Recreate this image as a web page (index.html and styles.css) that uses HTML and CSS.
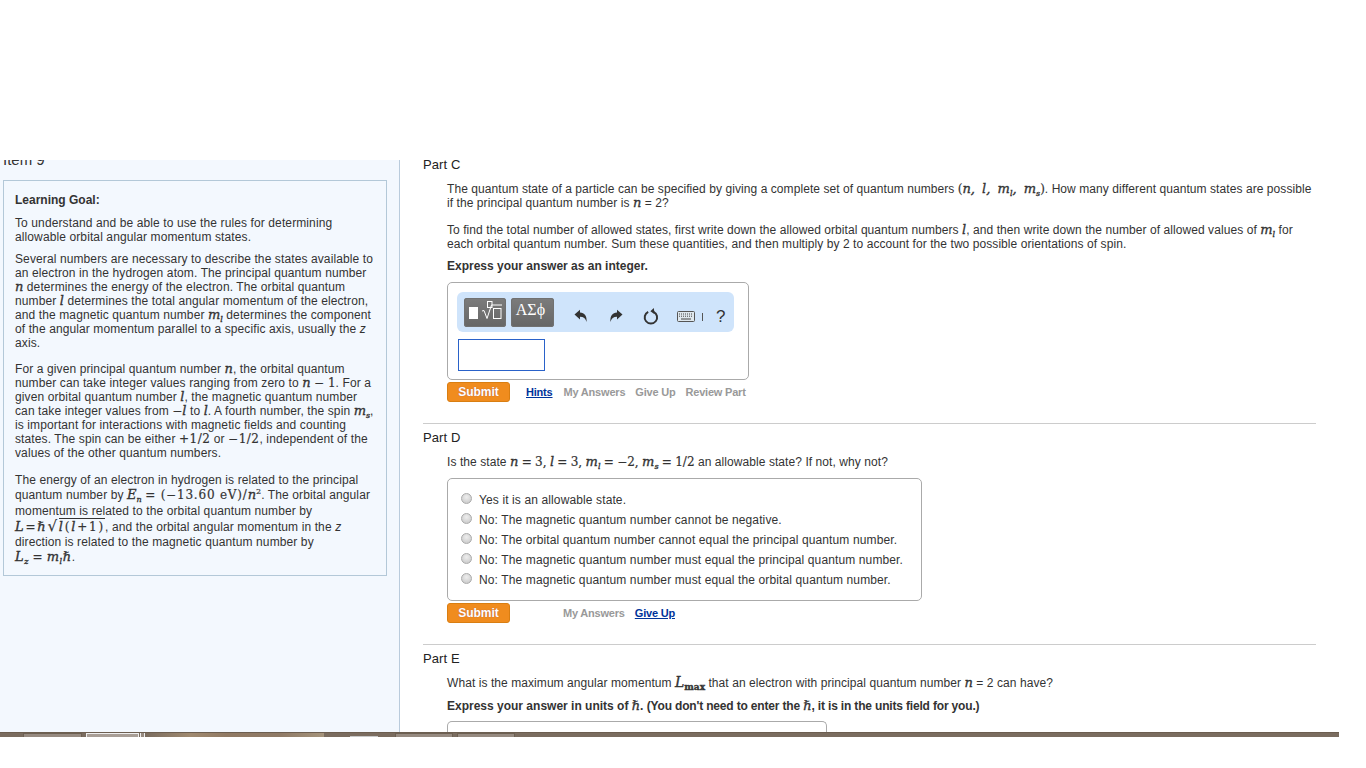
FILE: index.html
```html
<!DOCTYPE html>
<html lang="en">
<head>
<meta charset="utf-8">
<title>Item 9</title>
<link rel="stylesheet" href="styles.css">
</head>
<body>
<div class="top-space"></div>
<main class="viewport">
  <aside class="side">
    <h1 class="item-title">Item 9</h1>
    <section class="goal">
      <p class="goal-head"><strong>Learning Goal:</strong></p>
      <p class="p8">To understand and be able to use the rules for determining<br>allowable orbital angular momentum states.</p>
      <p class="p12">Several numbers are necessary to describe the states available to<br>an electron in the hydrogen atom. The principal quantum number<br><i class="m">n</i> determines the energy of the electron. The orbital quantum<br>number <i class="m">l</i> determines the total angular momentum of the electron,<br>and the magnetic quantum number <i class="m">m<sub class="s">l</sub></i> determines the component<br>of the angular momentum parallel to a specific axis, usually the <em>z</em><br>axis.</p>
      <p class="p13">For a given principal quantum number <i class="m">n</i>, the orbital quantum<br>number can take integer values ranging from zero to <i class="m">n</i> <span class="r">&minus; 1</span>. For a<br>given orbital quantum number <i class="m">l</i>, the magnetic quantum number<br>can take integer values from <span class="r">&minus;</span><i class="m">l</i> to <i class="m">l</i>. A fourth number, the spin <i class="m">m<sub class="s">s</sub></i>,<br>is important for interactions with magnetic fields and counting<br>states. The spin can be either <span class="r half">+1/2</span> or <span class="r half">&minus;1/2</span>, independent of the<br>values of the other quantum numbers.</p>
      <div class="energy">
        <span class="line l15">The energy of an electron in hydrogen is related to the principal</span>
        <span class="line l15">quantum number by <i class="m">E<sub class="s">n</sub></i> <span class="r spread">= (&minus;13.60 eV)/</span><i class="m">n</i><sup class="sp">2</sup>. The orbital angular</span>
        <span class="line l16">momentum is related to the orbital quantum number by</span>
        <span class="line l16"><span class="wider"><i class="m">L</i><span class="r">=</span><i class="m">&#8463;</i><span class="r root">&radic;</span><span class="over"><i class="m">l</i><span class="r">(</span><i class="m">l</i><span class="r">+1)</span></span></span>, and the orbital angular momentum in the <em>z</em></span>
        <span class="line l15">direction is related to the magnetic quantum number by</span>
        <span class="line l14"><span class="slight"><i class="m">L<sub class="s">z</sub></i> <span class="r">=</span> <i class="m">m<sub class="s">l</sub>&#8463;</i></span>.</span>
      </div>
    </section>
  </aside>

  <div class="content">
    <section class="part first">
      <h2 class="part-title">Part C</h2>
      <div class="part-body">
        <p class="t9">The quantum state of a particle can be specified by giving a complete set of quantum numbers <span class="r">(</span><i class="m wide">n, l, m<sub class="s">l</sub>, m<sub class="s">s</sub></i><span class="r">)</span>. How many different quantum states are possible<br>if the principal quantum number is <i class="m">n</i> = 2?</p>
        <p class="t13">To find the total number of allowed states, first write down the allowed orbital quantum numbers <i class="m">l</i>, and then write down the number of allowed values of <i class="m">m<sub class="s">l</sub></i> for<br>each orbital quantum number. Sum these quantities, and then multiply by 2 to account for the two possible orientations of spin.</p>
        <p class="t8"><strong>Express your answer as an integer.</strong></p>
        <div class="answer">
          <div class="toolbar">
            <div class="tool-btn first-btn">
              <svg width="42" height="29" viewBox="0 0 42 29">
                <rect x="5" y="9" width="9" height="12" fill="#fff"/>
                <rect x="23.5" y="3.5" width="4.5" height="6" fill="none" stroke="#fff"/>
                <path d="M18 13l2-.5 3 8 4.5-13.5H38" fill="none" stroke="#fff"/>
                <rect x="29.5" y="10.5" width="7.5" height="10" fill="none" stroke="#fff"/>
              </svg>
            </div>
            <div class="tool-btn greek">&Alpha;&Sigma;&#981;</div>
            <svg class="ico undo" width="14" height="14" viewBox="0 0 14 14"><path d="M0.5 5.5L6 0.8V3.6C10.5 3.8 13 6.8 12.6 13 11.6 9.6 9.6 7.8 6 7.8V10.4Z" fill="#333"/></svg>
            <svg class="ico redo" width="14" height="14" viewBox="0 0 14 14"><path d="M13.5 5.5L8 0.8V3.6C3.5 3.8 1 6.8 1.4 13 2.4 9.6 4.4 7.8 8 7.8V10.4Z" fill="#333"/></svg>
            <svg class="ico reset" width="16" height="17" viewBox="0 0 16 17"><path d="M5.2 3.8A6.2 6.2 0 1 0 10.6 3.8" fill="none" stroke="#333" stroke-width="2"/><path d="M10.8 0L7.4 3.2 11.6 6.2Z" fill="#333"/></svg>
            <svg class="ico keys" width="18" height="11" viewBox="0 0 18 11"><rect x="0.5" y="0.5" width="17" height="10" rx="1" fill="#dfe8ee" stroke="#555"/><path d="M2 3h14M2 5.2h14" stroke="#444" stroke-dasharray="1 1"/><path d="M4 8h10" stroke="#444"/></svg>
            <span class="pipe"></span>
            <span class="help">?</span>
          </div>
          <div class="field"></div>
        </div>
        <div class="actions">
          <span class="submit">Submit</span>
          <a class="act link hints" href="#">Hints</a>
          <span class="act">My Answers</span>
          <span class="act">Give Up</span>
          <span class="act">Review Part</span>
        </div>
      </div>
    </section>

    <section class="part">
      <h2 class="part-title">Part D</h2>
      <div class="part-body">
        <p class="t9">Is the state <i class="m">n</i><span class="r snug"> = 3,</span> <i class="m">l</i><span class="r snug"> = 3,</span> <i class="m">m<sub class="s">l</sub></i><span class="r snug"> = &minus;2,</span> <i class="m">m<sub class="s">s</sub></i><span class="r snug"> = 1/2</span> an allowable state? If not, why not?</p>
        <div class="choices">
          <label class="choice"><input class="radio" type="radio" name="d">Yes it is an allowable state.</label>
          <label class="choice"><input class="radio" type="radio" name="d">No: The magnetic quantum number cannot be negative.</label>
          <label class="choice"><input class="radio" type="radio" name="d">No: The orbital quantum number cannot equal the principal quantum number.</label>
          <label class="choice"><input class="radio" type="radio" name="d">No: The magnetic quantum number must equal the principal quantum number.</label>
          <label class="choice"><input class="radio" type="radio" name="d">No: The magnetic quantum number must equal the orbital quantum number.</label>
        </div>
        <div class="actions">
          <span class="submit">Submit</span>
          <span class="act my-only">My Answers</span>
          <a class="act link" href="#">Give Up</a>
        </div>
      </div>
    </section>

    <section class="part">
      <h2 class="part-title">Part E</h2>
      <div class="part-body">
        <p class="t9">What is the maximum angular momentum <i class="m lmax">L<sub class="s up">max</sub></i> that an electron with principal quantum number <i class="m">n</i> = 2 can have?</p>
        <p class="t9"><strong>Express your answer in units of <i class="m">&#8463;</i>. <span class="tight">(You don't need to enter the <i class="m">&#8463;</i>, it is in the units field for you.)</span></strong></p>
        <div class="answer-next"></div>
      </div>
    </section>
  </div>
</main>
<footer class="strip">
  <span class="seg s1"></span>
  <span class="seg s2"></span>
  <span class="seg s3"></span>
  <span class="seg s4"></span>
  <span class="seg s5"></span>
  <span class="seg s1 s7"></span>
  <span class="seg s1 s8"></span>
</footer>
</body>
</html>
```
FILE: styles.css
```css
* { box-sizing: border-box; }
html, body { margin: 0; padding: 0; background: #fff; overflow: hidden; }
body { font: 12px/14px "Liberation Sans", Arial, sans-serif; color: #333; width: 1366px; height: 768px; }
p { margin: 0; }
strong { letter-spacing: 0; }

.top-space { height: 160px; }
.viewport { display: flex; height: 572px; overflow: hidden; }

/* left column */
.side { width: 400px; flex: none; background: #f3f8fe; border-right: 1px solid #b9cbdc; padding-left: 3px; letter-spacing: .11px; }
.item-title { margin: -9px 0 0 0; font-size: 15px; line-height: 18px; font-weight: normal; color: #333; height: 29px; letter-spacing: 0; }
.goal { width: 384px; height: 396px; background: #f3f8fe; border: 1px solid #b3c8d8; padding: 12px 11px 0; }
.goal-head { margin-bottom: 9px; }
.p8 { margin-bottom: 8px; }
.p12 { margin-bottom: 12px; }
.p13 { margin-bottom: 13px; }
.line { display: block; white-space: nowrap; }
.l14 { line-height: 14px; }
.l15 { line-height: 15px; }
.l16 { line-height: 16px; }

/* math */
.m { font-family: "DejaVu Serif", serif; font-style: italic; font-weight: normal; font-size: 13px; line-height: 0; letter-spacing: 0; color: #333; -webkit-text-stroke: .35px #333; }
.r { font-family: "DejaVu Serif", serif; font-size: 12px; line-height: 0; letter-spacing: 0; color: #333; -webkit-text-stroke: .2px #333; }
.wide { word-spacing: 3px; }
.s { font-size: 8px; line-height: 0; vertical-align: -3px; }
.up { font-style: normal; font-weight: bold; font-size: 9px; }
.sp { font-family: "DejaVu Serif", serif; font-size: 8px; line-height: 0; vertical-align: 5px; -webkit-text-stroke: .2px #333; }
.over { border-top: 1px solid #333; padding-top: 1px; }
.root { font-size: 15px; }
.lmax { font-size: 14px; }
.spread { letter-spacing: .8px; }
.half { letter-spacing: .5px; }
.snug { word-spacing: -.5px; }
.wider .m, .wider .r { letter-spacing: 1.8px; }
.slight .m, .slight .r { letter-spacing: .6px; }
em { font-style: italic; }

/* right column */
.content { width: 893px; margin-left: 23px; flex: none; letter-spacing: .07px; }
.part { border-top: 1px solid #ccc; padding-top: 6px; padding-bottom: 21px; }
.part.first { border-top: 0; padding-top: 0; margin-top: -3px; padding-bottom: 21px; }
.part-title { margin: 0; font-size: 13px; line-height: 16px; font-weight: normal; color: #222; letter-spacing: .1px; }
.part-body { padding-left: 24px; }
.t9 { margin-top: 9px; }
.t13 { margin-top: 13px; }
.t8 { margin-top: 8px; }
.tight { letter-spacing: -.17px; }

/* answer widgets */
.answer { width: 302px; height: 98px; margin-top: 9px; border: 1px solid #aaa; border-radius: 5px; padding: 9px; }
.toolbar { display: flex; align-items: flex-start; width: 277px; height: 40px; padding: 6px 0 0 7px; background: #cfe4fb; border-radius: 6px; }
.tool-btn { height: 29px; border-radius: 3px; background: linear-gradient(#7c7c7c, #666); box-shadow: inset 0 0 0 1px #717171; color: #fff; flex: none; }
.first-btn { width: 42px; }
.greek { width: 43px; margin-left: 5px; padding-right: 4px; font: 16px/24px "Liberation Serif", serif; text-align: center; }
.ico { flex: none; }
.undo { margin: 11px 0 0 20px; }
.redo { margin: 11px 0 0 21px; }
.reset { margin: 10px 0 0 20px; }
.keys { margin: 13px 0 0 18px; }
.pipe { width: 1px; height: 8px; background: #555; margin: 15px 0 0 7px; }
.help { margin: 10px 0 0 13px; font-size: 17px; line-height: 18px; color: #333; letter-spacing: 0; }
.field { width: 87px; height: 32px; margin: 7px 0 0 1px; background: #fff; border: 1px solid #2a62c9; }

.actions { display: flex; align-items: center; height: 20px; margin-top: 2px; gap: 10px; }
.submit { width: 63px; height: 20px; background: #f08c1e; border: 1px solid #d97e12; border-radius: 3px; color: #fff; font-weight: bold; line-height: 18px; text-align: center; letter-spacing: 0; text-shadow: 0 0 1px #a55; }
.act { font-size: 11px; font-weight: bold; color: #999; letter-spacing: -.2px; }
.link { color: #00339a; text-decoration: underline; }
.hints { margin-left: 6px; margin-right: 1px; }
.my-only { margin-left: 43px; }

.choices { width: 475px; height: 123px; margin-top: 9px; border: 1px solid #aaa; border-radius: 5px; padding: 11px 0 0 13px; letter-spacing: .12px; }
.choice { display: flex; align-items: center; height: 20px; white-space: nowrap; }
.radio { appearance: none; -webkit-appearance: none; width: 11px; height: 11px; margin: -3px 7px 0 0; flex: none; border: 1px solid #aaa; border-radius: 50%; background: radial-gradient(circle at 50% 35%, #eee, #c4c4c4); }

.answer-next { width: 380px; height: 30px; margin-top: 8px; border: 1px solid #aaa; border-bottom: 0; border-radius: 5px 5px 0 0; }

/* bottom strip */
.strip { display: flex; width: 1339px; height: 5px; background: #7a6c5f; border-top: 1px solid #6c5e50; }
.seg { height: 4px; flex: none; }
.s1 { width: 59px; margin-left: 23px; background: #968a80; border: 1px solid #6d6052; border-bottom: 0; }
.s2 { width: 53px; margin-left: 4px; background: #a89e96; border: 1px solid #eee; border-bottom: 0; }
.s3 { width: 5px; margin-left: 1px; background: #968a80; border-left: 1px solid #eee; border-right: 1px solid #eee; }
.s4 { width: 178px; margin-left: 1px; background: linear-gradient(90deg, #7a6c5f, #a08a70 25%, #917a64 45%, #8f7a66 75%, #a5947c); }
.s5 { width: 28px; margin-left: 26px; background: linear-gradient(transparent 75%, #c8c8c8 75%); }
.s7 { margin-left: 17px; width: 58px; }
.s8 { margin-left: 4px; width: 58px; }
```
